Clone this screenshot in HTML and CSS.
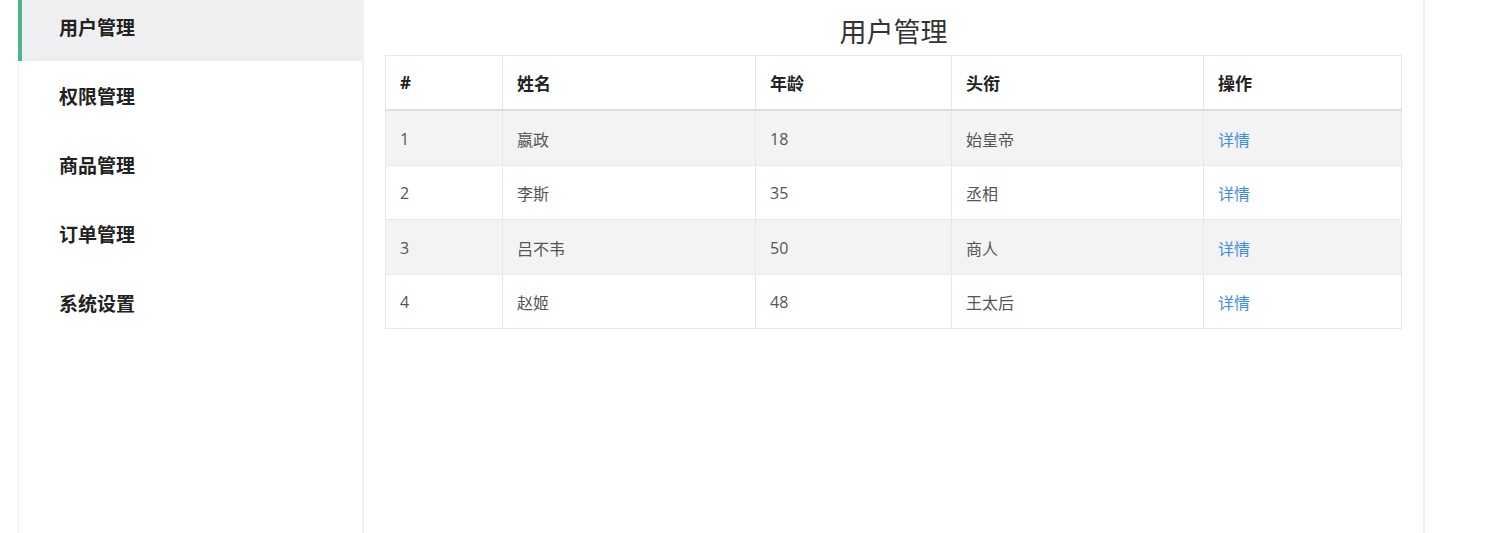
FILE: index.html
```html
<!DOCTYPE html>
<html lang="zh-CN">
<head>
<meta charset="utf-8">
<title>用户管理</title>
<link rel="stylesheet" href="styles.css">
</head>
<body>
<div class="page">
  <div class="gutter"></div>
  <nav class="sidebar">
    <a class="nav-item active">用户管理</a>
    <a class="nav-item">权限管理</a>
    <a class="nav-item">商品管理</a>
    <a class="nav-item">订单管理</a>
    <a class="nav-item">系统设置</a>
  </nav>
  <main class="content">
    <h2 class="title">用户管理</h2>
    <table class="table">
      <colgroup>
        <col class="c1"><col class="c2"><col class="c3"><col class="c4"><col class="c5">
      </colgroup>
      <thead>
        <tr><th>#</th><th>姓名</th><th>年龄</th><th>头衔</th><th>操作</th></tr>
      </thead>
      <tbody>
        <tr><td>1</td><td>嬴政</td><td>18</td><td>始皇帝</td><td><a class="link">详情</a></td></tr>
        <tr><td>2</td><td>李斯</td><td>35</td><td>丞相</td><td><a class="link">详情</a></td></tr>
        <tr><td>3</td><td>吕不韦</td><td>50</td><td>商人</td><td><a class="link">详情</a></td></tr>
        <tr><td>4</td><td>赵姬</td><td>48</td><td>王太后</td><td><a class="link">详情</a></td></tr>
      </tbody>
    </table>
  </main>
</div>
</body>
</html>
```
FILE: styles.css
```css
html, body {
  margin: 0;
  padding: 0;
  background: #fff;
  height: 100%;
  overflow: hidden;
}
body {
  font-family: "Open Sans", "Noto Sans CJK SC", sans-serif;
  color: #333;
}
.page {
  display: flex;
  height: 533px;
}
.gutter {
  width: 18px;
  flex: none;
}
.sidebar {
  width: 343px;
  flex: none;
  border-left: 1px solid #efefef;
  border-right: 2px solid #f0f0f0;
  display: flex;
  flex-direction: column;
  margin-top: -8px;
}
.nav-item {
  height: 69px;
  display: flex;
  align-items: center;
  padding-left: 37px;
  padding-bottom: 1px;
  box-sizing: border-box;
  font-size: 19px;
  font-weight: bold;
  color: #222;
  font-family: "Noto Sans CJK SC", sans-serif;
  border-left: 4px solid transparent;
  margin-left: -1px;
}
.nav-item.active {
  background: #efeff1;
  border-left-color: #4cb68a;
  padding-bottom: 0;
}
.content {
  width: 1017px;
  flex: none;
  padding: 0 21px;
  border-right: 2px solid #efefef;
}
.title {
  margin: 0;
  padding-top: 8px;
  height: 47px;
  line-height: 46px;
  text-align: center;
  font-size: 27px;
  font-weight: normal;
  color: #333;
  font-family: "Noto Sans CJK SC", sans-serif;
}
.table {
  width: 1016px;
  border-collapse: collapse;
  border: 1px solid #e3e3e3;
  table-layout: fixed;
  font-size: 16px;
}
.c1 { width: 117px; }
.c2 { width: 253px; }
.c3 { width: 196px; }
.c4 { width: 252px; }
.c5 { width: 198px; }
.table th, .table td {
  border: 1px solid #e8e8e8;
  text-align: left;
  padding: 0 13px 0 14px;
}
.table th {
  height: 53px;
  font-weight: bold;
  color: #222;
  font-size: 17px;
  border-bottom: 2px solid #dedede;
}
.table td {
  height: 51.5px;
  padding-top: 2px;
  color: #555;
}
.table tbody tr:nth-child(odd) {
  background: #f3f3f3;
}
.link {
  color: #3c8ee8;
  cursor: pointer;
}
```
